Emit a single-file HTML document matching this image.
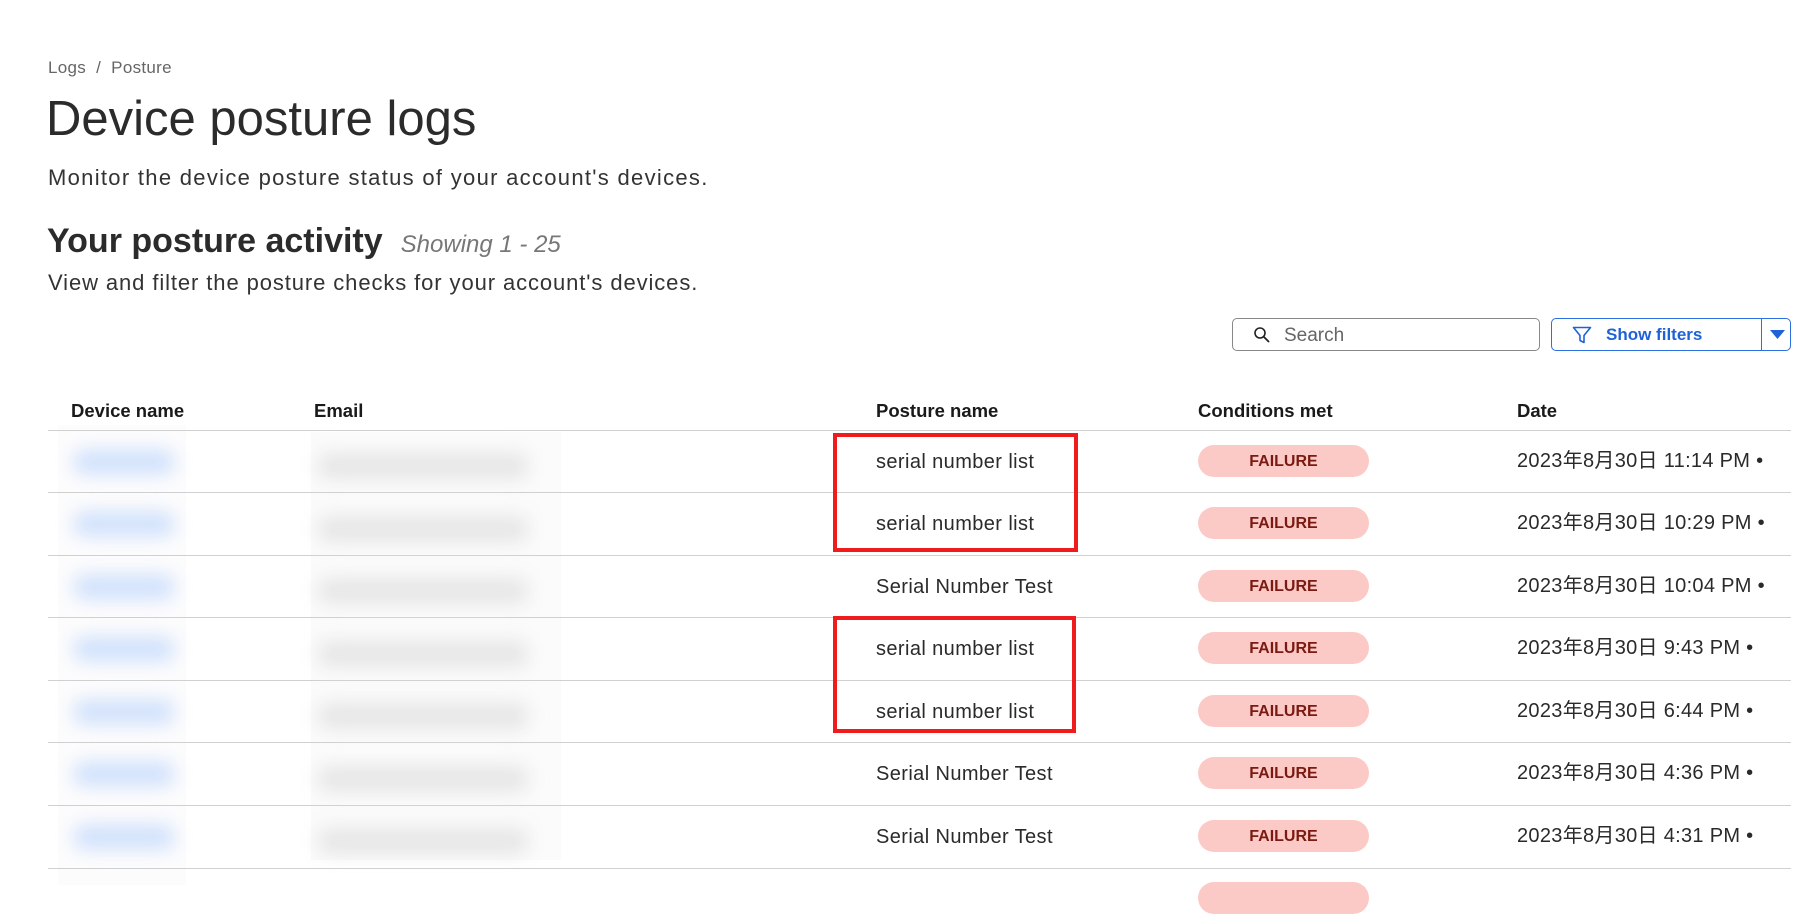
<!DOCTYPE html>
<html><head><meta charset="utf-8"><style>
*{margin:0;padding:0;box-sizing:border-box}
body{width:1819px;height:885px;overflow:hidden;background:#fff;font-family:"Liberation Sans","Noto Sans CJK JP",sans-serif;color:#222;position:relative}
.a{position:absolute;white-space:nowrap}
.bc{left:48px;top:58px;font-size:17px;color:#666;letter-spacing:0.3px}
.h1{left:46px;top:91px;font-size:49px;color:#2b2b2b}
.sub{left:48px;top:165px;font-size:22px;color:#333;letter-spacing:1.3px}
.h2{left:47px;top:222px;font-size:34px;color:#2b2b2b;font-weight:bold}
.h2 i{font-size:24px;color:#777;margin-left:18px;font-weight:normal}
.sub2{left:48px;top:270px;font-size:22px;color:#333;letter-spacing:0.9px}
.search{left:1232px;top:318px;width:308px;height:33px;border:1px solid #888;border-radius:5px}
.search span{position:absolute;left:51px;top:6px;font-size:19px;color:#666}
.filt{left:1551px;top:318px;width:240px;height:33px;border:1px solid #2b6fe0;border-radius:5px}
.filt span{position:absolute;left:54px;top:6px;font-size:17px;color:#1f62d8;font-weight:bold}
.filt .dv{position:absolute;left:209px;top:0;width:1px;height:31px;background:#2b6fe0}
.th{top:400px;font-size:18.5px;font-weight:bold;color:#1a1a1a}
.line{position:absolute;left:48px;width:1743px;height:1px;background:#d0d0d0}
.td{font-size:20px;color:#2a2a2a;letter-spacing:0.4px;line-height:24px}
.dt{font-size:20px;line-height:24px;color:#2a2a2a;letter-spacing:0.3px}
.pill{position:absolute;left:1198px;width:171px;height:32px;border-radius:16px;background:#fccac6;color:#7a1a12;font-weight:bold;font-size:16px;text-align:center;line-height:33px}
.blob{position:absolute;filter:blur(9px);border-radius:10px}
.rb{position:absolute;border:4px solid #ee1c1c}
</style></head><body>
<div class="a bc">Logs&nbsp;&nbsp;/&nbsp;&nbsp;Posture</div>
<div class="a h1">Device posture logs</div>
<div class="a sub">Monitor the device posture status of your account's devices.</div>
<div class="a h2">Your posture activity<i>Showing 1 - 25</i></div>
<div class="a sub2">View and filter the posture checks for your account's devices.</div>
<div class="a search"><svg style="position:absolute;left:20px;top:7px" width="18" height="18" viewBox="0 0 18 18"><circle cx="7" cy="7" r="5" fill="none" stroke="#222" stroke-width="1.6"/><path d="M11 11l5 5" stroke="#222" stroke-width="1.8"/></svg><span>Search</span></div>
<div class="a filt"><svg style="position:absolute;left:20px;top:7px" width="20" height="19" viewBox="0 0 20 19"><path d="M1.5 1.5h17l-6.5 8v7l-4-2v-5z" fill="none" stroke="#1f62d8" stroke-width="1.6" stroke-linejoin="round"/></svg><span>Show filters</span><div class="dv"></div><svg style="position:absolute;left:218px;top:11px" width="15" height="10"><path d="M0 0h15l-7.5 9z" fill="#1f62d8"/></svg></div>
<div class="a th" style="left:71px">Device name</div>
<div class="a th" style="left:314px">Email</div>
<div class="a th" style="left:876px">Posture name</div>
<div class="a th" style="left:1198px">Conditions met</div>
<div class="a th" style="left:1517px">Date</div>
<div style="position:absolute;left:58px;top:425px;width:128px;height:460px;background:#fcfcfd"></div>
<div style="position:absolute;left:311px;top:432px;width:250px;height:428px;background:#fbfbfb"></div>
<div class="line" style="top:430px"></div>
<div class="line" style="top:492px"></div>
<div class="line" style="top:555px"></div>
<div class="line" style="top:617px"></div>
<div class="line" style="top:680px"></div>
<div class="line" style="top:742px"></div>
<div class="line" style="top:805px"></div>
<div class="line" style="top:868px"></div>
<div class="blob" style="left:74px;top:450px;width:100px;height:24px;background:#cfe0fc"></div>
<div class="blob" style="left:74px;top:512px;width:100px;height:24px;background:#cfe0fc"></div>
<div class="blob" style="left:74px;top:575px;width:100px;height:24px;background:#cfe0fc"></div>
<div class="blob" style="left:74px;top:637px;width:100px;height:24px;background:#cfe0fc"></div>
<div class="blob" style="left:74px;top:700px;width:100px;height:24px;background:#cfe0fc"></div>
<div class="blob" style="left:74px;top:762px;width:100px;height:24px;background:#cfe0fc"></div>
<div class="blob" style="left:74px;top:825px;width:100px;height:24px;background:#cfe0fc"></div>
<div class="blob" style="left:318px;top:453px;width:210px;height:26px;background:#e6e6e6"></div>
<div class="blob" style="left:318px;top:516px;width:210px;height:26px;background:#e6e6e6"></div>
<div class="blob" style="left:318px;top:578px;width:210px;height:26px;background:#e6e6e6"></div>
<div class="blob" style="left:318px;top:641px;width:210px;height:26px;background:#e6e6e6"></div>
<div class="blob" style="left:318px;top:703px;width:210px;height:26px;background:#e6e6e6"></div>
<div class="blob" style="left:318px;top:766px;width:210px;height:26px;background:#e6e6e6"></div>
<div class="blob" style="left:318px;top:828px;width:210px;height:26px;background:#e6e6e6"></div>

<div class="a td" style="left:876px;top:450px">serial number list</div>
<div class="a td" style="left:876px;top:512px">serial number list</div>
<div class="a td" style="left:876px;top:575px">Serial Number Test</div>
<div class="a td" style="left:876px;top:637px">serial number list</div>
<div class="a td" style="left:876px;top:700px">serial number list</div>
<div class="a td" style="left:876px;top:762px">Serial Number Test</div>
<div class="a td" style="left:876px;top:825px">Serial Number Test</div>

<div class="pill" style="top:445px">FAILURE</div>
<div class="pill" style="top:507px">FAILURE</div>
<div class="pill" style="top:570px">FAILURE</div>
<div class="pill" style="top:632px">FAILURE</div>
<div class="pill" style="top:695px">FAILURE</div>
<div class="pill" style="top:757px">FAILURE</div>
<div class="pill" style="top:820px">FAILURE</div>
<div class="pill" style="top:882px"></div>

<div class="a dt" style="left:1517px;top:449px">2023年8月30日 11:14 PM •</div>
<div class="a dt" style="left:1517px;top:511px">2023年8月30日 10:29 PM •</div>
<div class="a dt" style="left:1517px;top:574px">2023年8月30日 10:04 PM •</div>
<div class="a dt" style="left:1517px;top:636px">2023年8月30日 9:43 PM •</div>
<div class="a dt" style="left:1517px;top:699px">2023年8月30日 6:44 PM •</div>
<div class="a dt" style="left:1517px;top:761px">2023年8月30日 4:36 PM •</div>
<div class="a dt" style="left:1517px;top:824px">2023年8月30日 4:31 PM •</div>

<div class="rb" style="left:833px;top:433px;width:245px;height:119px"></div>
<div class="rb" style="left:833px;top:616px;width:243px;height:117px"></div>
</body></html>
